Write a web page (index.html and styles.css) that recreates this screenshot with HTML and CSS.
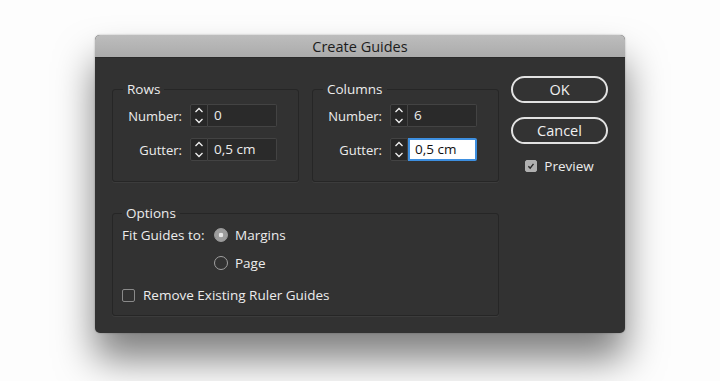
FILE: index.html
```html
<!DOCTYPE html>
<html lang="en">
<head>
    <meta charset="UTF-8">
    <title>Create Guides</title>
    <link rel="stylesheet" href="styles.css">
</head>
<body>
    <div class="dialog">
        <div class="titlebar">Create Guides</div>
        <div class="content">
            <div class="main">
                <div class="pair">
                    <fieldset class="group">
                        <legend>Rows</legend>
                        <div class="fields">
                            <span class="lbl">Number:</span>
                            <div class="spin">
                                <span class="arrows"><svg width="12" height="21" viewBox="0 0 12 21"><path d="M2.5 7 L6 3.5 L9.5 7 M2.5 14 L6 17.5 L9.5 14" fill="none" stroke="#f0f0f0" stroke-width="1.3"/></svg></span>
                                <span class="value">0</span>
                            </div>
                            <span class="lbl">Gutter:</span>
                            <div class="spin">
                                <span class="arrows"><svg width="12" height="21" viewBox="0 0 12 21"><path d="M2.5 7 L6 3.5 L9.5 7 M2.5 14 L6 17.5 L9.5 14" fill="none" stroke="#f0f0f0" stroke-width="1.3"/></svg></span>
                                <span class="value">0,5 cm</span>
                            </div>
                        </div>
                    </fieldset>
                    <fieldset class="group">
                        <legend>Columns</legend>
                        <div class="fields">
                            <span class="lbl">Number:</span>
                            <div class="spin">
                                <span class="arrows"><svg width="12" height="21" viewBox="0 0 12 21"><path d="M2.5 7 L6 3.5 L9.5 7 M2.5 14 L6 17.5 L9.5 14" fill="none" stroke="#f0f0f0" stroke-width="1.3"/></svg></span>
                                <span class="value">6</span>
                            </div>
                            <span class="lbl">Gutter:</span>
                            <div class="spin">
                                <span class="arrows"><svg width="12" height="21" viewBox="0 0 12 21"><path d="M2.5 7 L6 3.5 L9.5 7 M2.5 14 L6 17.5 L9.5 14" fill="none" stroke="#f0f0f0" stroke-width="1.3"/></svg></span>
                                <span class="value active">0,5 cm</span>
                            </div>
                        </div>
                    </fieldset>
                </div>
                <fieldset class="group options">
                    <legend>Options</legend>
                    <div class="opt-row">
                        <span class="fit-lbl">Fit Guides to:</span>
                        <span class="radio checked"></span>
                        <span>Margins</span>
                    </div>
                    <div class="opt-row indent">
                        <span class="radio"></span>
                        <span>Page</span>
                    </div>
                    <div class="opt-row remove">
                        <span class="check"></span>
                        <span>Remove Existing Ruler Guides</span>
                    </div>
                </fieldset>
            </div>
            <div class="side">
                <button type="button" class="btn">OK</button>
                <button type="button" class="btn">Cancel</button>
                <div class="preview">
                    <span class="check on"><svg width="12" height="12" viewBox="0 0 12 12"><path d="M2.8 6.2 L5 8.5 L9 3.5" fill="none" stroke="#2a2a2a" stroke-width="1.7"/></svg></span>
                    <span>Preview</span>
                </div>
            </div>
        </div>
    </div>
</body>
</html>
```

FILE: styles.css
```css
html, body {
    height: 100%;
}
body {
    margin: 0;
    min-height: 381px;
    background-color: #fdfdfd;
    font-family: "Open Sans", "Liberation Sans", sans-serif;
    font-size: 13.5px;
    color: #ececec;
}
.dialog {
    width: 530px;
    height: 298px;
    margin: 0 0 0 95px;
    position: relative;
    top: 35px;
    background: #323232;
    border-radius: 5px;
    box-shadow: 0 26px 38px rgba(0, 0, 0, 0.5), 0 0 2px rgba(0, 0, 0, 0.3);
    overflow: hidden;
}
.titlebar {
    height: 23px;
    line-height: 23px;
    text-align: center;
    font-size: 14.5px;
    color: #1c1c1c;
    background: linear-gradient(#bdbdbd, #ababab);
    border-bottom: 1px solid #2a2a2a;
    box-sizing: border-box;
}
.content {
    display: flex;
    padding: 18px 17px 0 17px;
}
.main {
    width: 387px;
    padding-top: 5px;
}
.pair {
    display: flex;
    gap: 13px;
}
.group {
    margin: 0;
    border: 1px solid #262626;
    border-radius: 3px;
    box-shadow: 0 1px 0 rgba(255, 255, 255, 0.05);
    min-width: 0;
}
.group legend {
    padding: 0 4px;
    line-height: 16px;
}
.pair .group {
    width: 187px;
    box-sizing: border-box;
    padding: 7px 0 20px 15px;
}
.pair .group legend {
    margin-left: -5px;
}
.fields {
    display: grid;
    grid-template-columns: 54px auto;
    column-gap: 8px;
    row-gap: 11px;
    align-items: center;
    font-size: 13px;
}
.lbl {
    text-align: right;
    white-space: nowrap;
}
.spin {
    display: flex;
    height: 23px;
    width: 87px;
    font-size: 13.5px;
}
.arrows {
    width: 18px;
    display: flex;
    align-items: center;
    justify-content: center;
    background: #272727;
    border: 1px solid #434343;
    border-radius: 2px 0 0 2px;
    box-sizing: border-box;
}
.value {
    flex: 1;
    background: #2a2a2a;
    border: 1px solid #434343;
    border-left: none;
    border-radius: 0 2px 2px 0;
    padding-left: 6px;
    line-height: 21px;
}
.value.active {
    background: #fff;
    color: #111;
    border: 2px solid #3d8fe0;
    line-height: 19px;
    padding-left: 5px;
}
.options {
    margin-top: 23px;
    padding: 6px 9px 12px 9px;
}
.options legend {
    margin-left: 0;
}
.opt-row {
    display: flex;
    align-items: center;
    height: 16px;
}
.opt-row.indent {
    margin-top: 12px;
    padding-left: 92px;
}
.opt-row.remove {
    margin-top: 16px;
}
.fit-lbl {
    width: 92px;
}
.radio {
    width: 14px;
    height: 14px;
    border-radius: 50%;
    border: 1px solid #a0a0a0;
    box-sizing: border-box;
    margin-right: 7px;
}
.radio.checked {
    background: radial-gradient(circle, #e6e6e6 0 2px, #9c9c9c 2.6px);
    border-color: #9c9c9c;
}
.check {
    width: 13px;
    height: 13px;
    border: 1px solid #8a8a8a;
    border-radius: 2px;
    box-sizing: border-box;
    margin-right: 8px;
    display: flex;
    align-items: center;
    justify-content: center;
}
.check.on {
    width: 12px;
    height: 12px;
    background: #b0b0b0;
    border-color: #b0b0b0;
    margin-right: 7px;
}
.side {
    margin-left: 12px;
    width: 97px;
    display: flex;
    flex-direction: column;
    align-items: center;
}
.btn {
    width: 97px;
    height: 27px;
    margin-bottom: 14px;
    background: #333;
    color: #f0f0f0;
    font-family: inherit;
    font-size: 14.5px;
    border: 2px solid #e2e2e2;
    border-radius: 14px;
    padding: 0;
}
.preview {
    display: flex;
    align-items: center;
    margin-top: -1px;
}
```
